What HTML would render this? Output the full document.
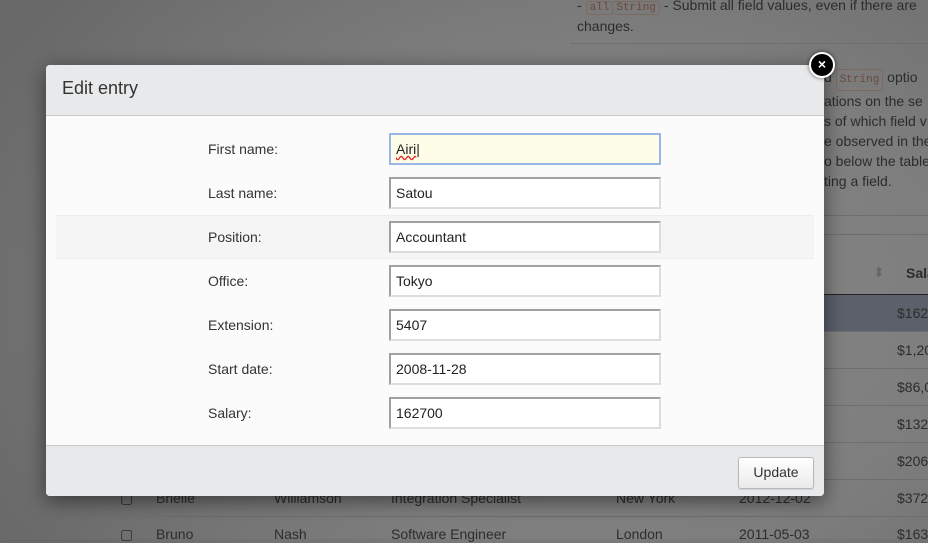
<!DOCTYPE html>
<html><head><style>
*{margin:0;padding:0;box-sizing:border-box}
body{width:928px;height:539px;overflow:hidden;position:relative;font-family:"Liberation Sans",sans-serif;
background:radial-gradient(ellipse 700px 500px at 600px 300px,#878787 0%,#7e7e7e 50%,#686868 100%);}
.bg{position:absolute;color:#2c2c2c;font-size:14px;white-space:nowrap}
.code{display:inline-block;border:1px solid #7a6a60;border-radius:3px;font-family:"Liberation Mono",monospace;font-size:11px;color:#6a4a3a;padding:0 3px}
.line{position:absolute;background:#6e6e6e;height:1px}
.modal{position:absolute;left:46px;top:65px;width:778px;height:431px;background:#fbfbfb;border-radius:4px;box-shadow:0 5px 20px rgba(0,0,0,.5);overflow:hidden}
.hd{height:51px;background:#e8e9ea;border-bottom:1px solid #c8c8c8;padding:13px 16px;font-size:18px;color:#333}
.ft{position:absolute;left:0;right:0;bottom:0;height:51px;background:#e8e9ea;border-top:1px solid #c8c8c8}
.btn{position:absolute;right:10px;top:11px;width:76px;height:32px;border:1px solid #b8b8b8;border-radius:3px;background:linear-gradient(#fff,#eaeaea);font-size:14px;color:#333;text-align:center;line-height:29px;box-shadow:0 1px 1px rgba(0,0,0,.1)}
.row{position:absolute;left:10px;width:758px;height:44px}
.row.alt{background:#f5f5f5;border-top:1px solid #eee;border-bottom:1px solid #eee}
.lab{position:absolute;left:152px;top:14px;font-size:14px;color:#333}
.inp{position:absolute;left:333px;top:6px;width:272px;height:32px;border:2px solid #a0a0a0;border-right-color:#ddd;border-bottom-color:#ddd;background:#fff;font-size:14px;color:#222;padding:6px 5px}
.inp.f{border:2px solid #9ab6e6;background:#fefee8}
.close{position:absolute;left:809px;top:52px;width:26px;height:26px;border-radius:50%;background:#000;border:2px solid #fff;box-shadow:0 0 4px rgba(0,0,0,.6);color:#fff;font-size:14px;font-weight:bold;text-align:center;line-height:21px}
</style></head><body>
<div class="bg" style="left:577px;top:-3px">- <span class="code">all</span><span class="code" style="border-left:none">String</span> - Submit all field values, even if there are</div>
<div class="bg" style="left:577px;top:18px">changes.</div>
<div class="line" style="left:570px;top:43px;width:358px"></div>
<div class="bg" style="left:824px;top:67px;line-height:20px;width:104px;overflow:hidden">d <span class="code">String</span> optio<br>ations on the se<br>s of which field v<br>e observed in the<br>o below the table<br>ting a field.</div>
<div class="line" style="left:824px;top:215px;width:104px"></div>
<div class="line" style="left:824px;top:234px;width:104px"></div>
<div class="bg" style="left:873px;top:264px;color:#666">⬍</div>
<div class="bg" style="left:906px;top:265px;font-weight:bold">Sala</div>
<div class="line" style="left:824px;top:294px;width:104px;background:#222"></div>
<div style="position:absolute;left:824px;top:295px;width:104px;height:36px;background:#5b606a"></div>
<div class="bg" style="left:897px;top:305px">$162</div>
<div class="line" style="left:824px;top:331px;width:104px"></div>
<div class="bg" style="left:897px;top:342px">$1,20</div>
<div class="line" style="left:824px;top:368px;width:104px"></div>
<div class="bg" style="left:897px;top:379px">$86,0</div>
<div class="line" style="left:824px;top:405px;width:104px"></div>
<div class="bg" style="left:897px;top:416px">$132</div>
<div class="line" style="left:824px;top:442px;width:104px"></div>
<div class="bg" style="left:897px;top:453px">$206</div>
<div class="line" style="left:824px;top:479px;width:104px"></div>
<div class="bg" style="left:120px;top:490px;width:808px">
<span style="position:absolute;left:0">▢</span><span style="position:absolute;left:36px">Brielle</span><span style="position:absolute;left:154px">Williamson</span><span style="position:absolute;left:271px">Integration Specialist</span><span style="position:absolute;left:496px">New York</span><span style="position:absolute;left:619px">2012-12-02</span><span style="position:absolute;left:777px">$372</span></div>
<div class="line" style="left:107px;top:516px;width:821px"></div>
<div class="bg" style="left:120px;top:526px;width:808px">
<span style="position:absolute;left:0">▢</span><span style="position:absolute;left:36px">Bruno</span><span style="position:absolute;left:154px">Nash</span><span style="position:absolute;left:271px">Software Engineer</span><span style="position:absolute;left:496px">London</span><span style="position:absolute;left:619px">2011-05-03</span><span style="position:absolute;left:777px">$163</span></div>

<div class="modal">
<div class="hd">Edit entry</div>
<div class="row" style="top:62px"><span class="lab">First name:</span><div class="inp f"><span style="text-decoration:underline wavy #e03030">Airi</span>|</div></div>
<div class="row" style="top:106px"><span class="lab">Last name:</span><div class="inp">Satou</div></div>
<div class="row alt" style="top:150px"><span class="lab" style="top:13px">Position:</span><div class="inp" style="top:5px">Accountant</div></div>
<div class="row" style="top:194px"><span class="lab">Office:</span><div class="inp">Tokyo</div></div>
<div class="row" style="top:238px"><span class="lab">Extension:</span><div class="inp">5407</div></div>
<div class="row" style="top:282px"><span class="lab">Start date:</span><div class="inp">2008-11-28</div></div>
<div class="row" style="top:326px"><span class="lab">Salary:</span><div class="inp">162700</div></div>
<div class="ft"><div class="btn">Update</div></div>
</div>
<div class="close">×</div>
</body></html>
